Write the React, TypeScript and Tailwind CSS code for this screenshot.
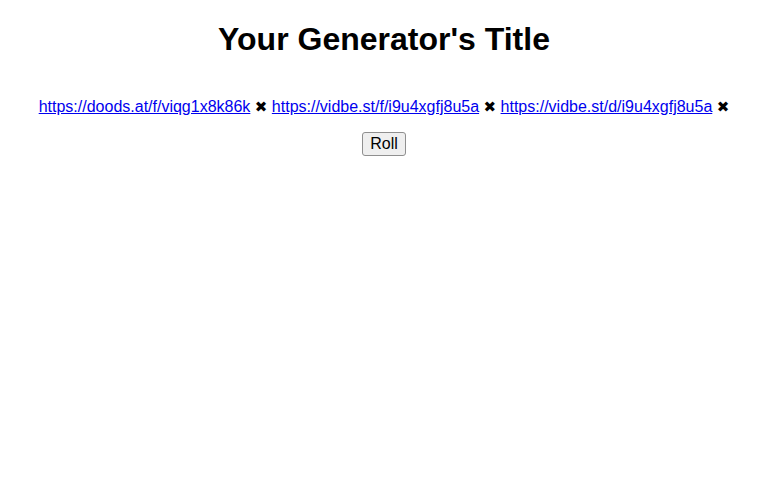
import React from "react";

const links = [
  "https://doods.at/f/viqg1x8k86k",
  "https://vidbe.st/f/i9u4xgfj8u5a",
  "https://vidbe.st/d/i9u4xgfj8u5a",
];

export default function App() {
  return (
    <div className="bg-white w-[768px] h-[480px] text-black text-center" style={{ fontFamily: '"Liberation Sans", Arial, sans-serif' }}>
      <h1 className="text-[32px] font-bold leading-[37px] pt-[21px]">Your Generator's Title</h1>
      <div className="mt-[40px] text-[16px] leading-[18px]">
        {links.map((l, i) => (
          <React.Fragment key={i}>
            {i > 0 && " "}
            <a href="#" className="text-[#0000ee] underline">{l}</a>{" "}
            <span style={{ fontFamily: '"DejaVu Sans", sans-serif' }} className="text-[15px] leading-[18px]">✖</span>
          </React.Fragment>
        ))}
      </div>
      <div className="mt-[16px]">
        <button className="text-[16px] leading-[18px] px-[7px] py-[2px] bg-[#efefef] border border-[#8f8f8f] rounded-[3px]">Roll</button>
      </div>
    </div>
  );
}
